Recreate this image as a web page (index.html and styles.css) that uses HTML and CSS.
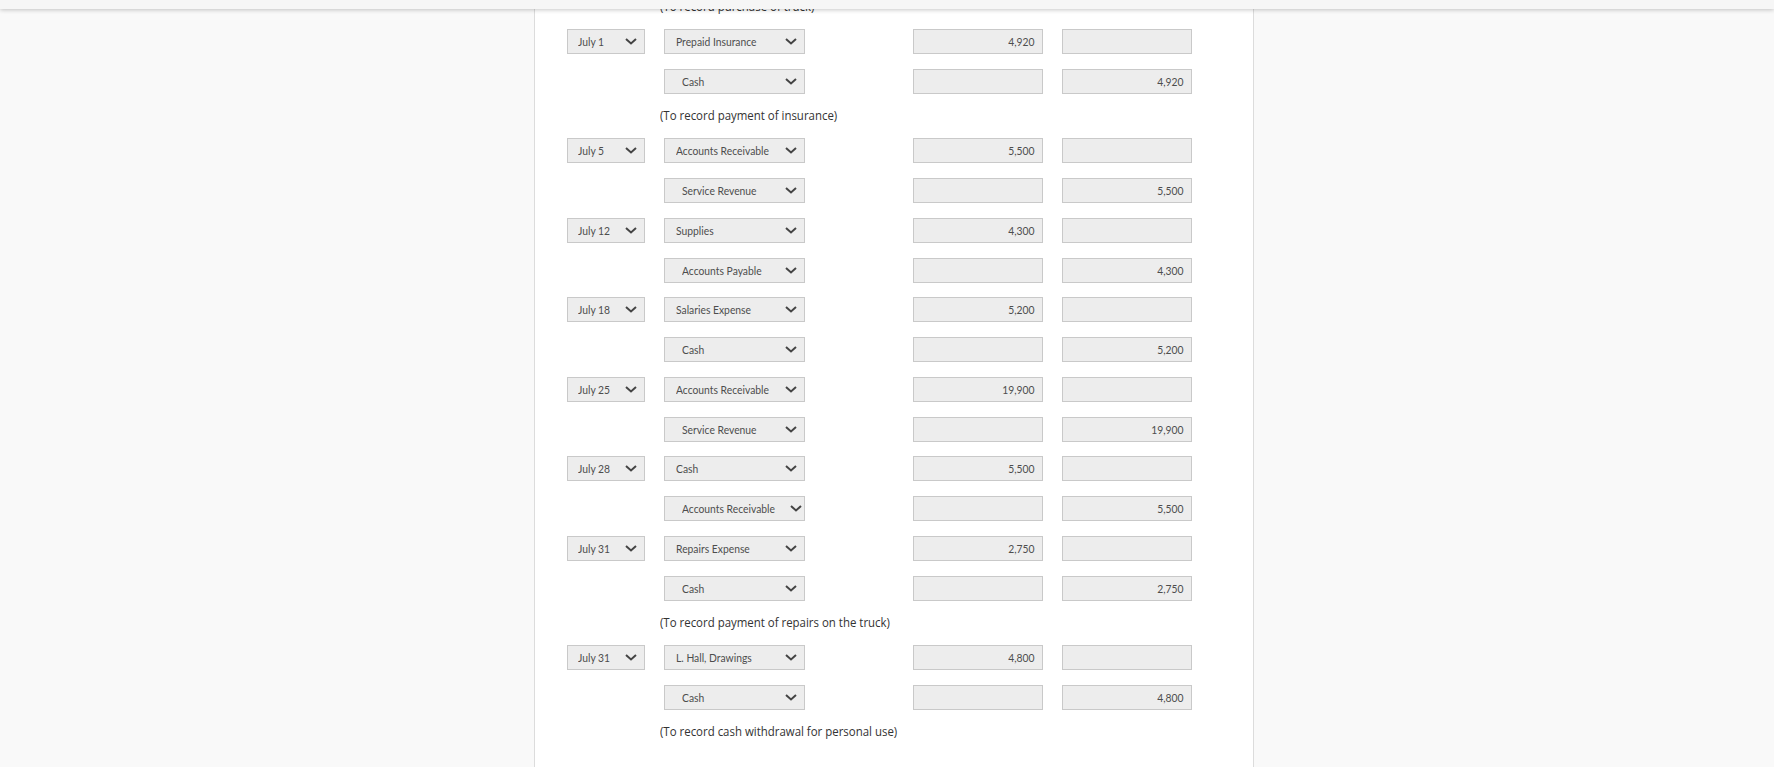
FILE: index.html
```html
<!DOCTYPE html>
<html lang="en">
<head>
<meta charset="utf-8">
<title>Journal entries</title>
<link rel="stylesheet" href="styles.css">
</head>
<body>
<header class="topbar"></header>
<main class="page">
  <section class="panel">
    <div class="journal">
      <p class="note note--first"><span class="ntxt">(To record purchase of truck)</span></p>

      <div class="row">
        <div class="sel sel--date"><span class="txt">July 1</span><svg class="chev" viewBox="0 0 12 7"><path d="M1 1l5 4.5L11 1"/></svg></div>
        <div class="sel sel--acct"><span class="txt">Prepaid Insurance</span><svg class="chev" viewBox="0 0 12 7"><path d="M1 1l5 4.5L11 1"/></svg></div>
        <div class="amt amt--dr"><span class="num">4,920</span></div>
        <div class="amt amt--cr"></div>
      </div>
      <div class="row">
        <div class="date-gap"></div>
        <div class="sel sel--acct sel--credit"><span class="txt">Cash</span><svg class="chev" viewBox="0 0 12 7"><path d="M1 1l5 4.5L11 1"/></svg></div>
        <div class="amt amt--dr"></div>
        <div class="amt amt--cr"><span class="num">4,920</span></div>
      </div>
      <p class="note"><span class="ntxt">(To record payment of insurance)</span></p>

      <div class="row">
        <div class="sel sel--date"><span class="txt">July 5</span><svg class="chev" viewBox="0 0 12 7"><path d="M1 1l5 4.5L11 1"/></svg></div>
        <div class="sel sel--acct"><span class="txt">Accounts Receivable</span><svg class="chev" viewBox="0 0 12 7"><path d="M1 1l5 4.5L11 1"/></svg></div>
        <div class="amt amt--dr"><span class="num">5,500</span></div>
        <div class="amt amt--cr"></div>
      </div>
      <div class="row">
        <div class="date-gap"></div>
        <div class="sel sel--acct sel--credit"><span class="txt">Service Revenue</span><svg class="chev" viewBox="0 0 12 7"><path d="M1 1l5 4.5L11 1"/></svg></div>
        <div class="amt amt--dr"></div>
        <div class="amt amt--cr"><span class="num">5,500</span></div>
      </div>

      <div class="row">
        <div class="sel sel--date"><span class="txt">July 12</span><svg class="chev" viewBox="0 0 12 7"><path d="M1 1l5 4.5L11 1"/></svg></div>
        <div class="sel sel--acct"><span class="txt">Supplies</span><svg class="chev" viewBox="0 0 12 7"><path d="M1 1l5 4.5L11 1"/></svg></div>
        <div class="amt amt--dr"><span class="num">4,300</span></div>
        <div class="amt amt--cr"></div>
      </div>
      <div class="row">
        <div class="date-gap"></div>
        <div class="sel sel--acct sel--credit"><span class="txt">Accounts Payable</span><svg class="chev" viewBox="0 0 12 7"><path d="M1 1l5 4.5L11 1"/></svg></div>
        <div class="amt amt--dr"></div>
        <div class="amt amt--cr"><span class="num">4,300</span></div>
      </div>

      <div class="row">
        <div class="sel sel--date"><span class="txt">July 18</span><svg class="chev" viewBox="0 0 12 7"><path d="M1 1l5 4.5L11 1"/></svg></div>
        <div class="sel sel--acct"><span class="txt">Salaries Expense</span><svg class="chev" viewBox="0 0 12 7"><path d="M1 1l5 4.5L11 1"/></svg></div>
        <div class="amt amt--dr"><span class="num">5,200</span></div>
        <div class="amt amt--cr"></div>
      </div>
      <div class="row">
        <div class="date-gap"></div>
        <div class="sel sel--acct sel--credit"><span class="txt">Cash</span><svg class="chev" viewBox="0 0 12 7"><path d="M1 1l5 4.5L11 1"/></svg></div>
        <div class="amt amt--dr"></div>
        <div class="amt amt--cr"><span class="num">5,200</span></div>
      </div>

      <div class="row">
        <div class="sel sel--date"><span class="txt">July 25</span><svg class="chev" viewBox="0 0 12 7"><path d="M1 1l5 4.5L11 1"/></svg></div>
        <div class="sel sel--acct"><span class="txt">Accounts Receivable</span><svg class="chev" viewBox="0 0 12 7"><path d="M1 1l5 4.5L11 1"/></svg></div>
        <div class="amt amt--dr"><span class="num">19,900</span></div>
        <div class="amt amt--cr"></div>
      </div>
      <div class="row">
        <div class="date-gap"></div>
        <div class="sel sel--acct sel--credit"><span class="txt">Service Revenue</span><svg class="chev" viewBox="0 0 12 7"><path d="M1 1l5 4.5L11 1"/></svg></div>
        <div class="amt amt--dr"></div>
        <div class="amt amt--cr"><span class="num">19,900</span></div>
      </div>

      <div class="row">
        <div class="sel sel--date"><span class="txt">July 28</span><svg class="chev" viewBox="0 0 12 7"><path d="M1 1l5 4.5L11 1"/></svg></div>
        <div class="sel sel--acct"><span class="txt">Cash</span><svg class="chev" viewBox="0 0 12 7"><path d="M1 1l5 4.5L11 1"/></svg></div>
        <div class="amt amt--dr"><span class="num">5,500</span></div>
        <div class="amt amt--cr"></div>
      </div>
      <div class="row">
        <div class="date-gap"></div>
        <div class="sel sel--acct sel--credit"><span class="txt">Accounts Receivable</span><svg class="chev" viewBox="0 0 12 7"><path d="M1 1l5 4.5L11 1"/></svg></div>
        <div class="amt amt--dr"></div>
        <div class="amt amt--cr"><span class="num">5,500</span></div>
      </div>

      <div class="row">
        <div class="sel sel--date"><span class="txt">July 31</span><svg class="chev" viewBox="0 0 12 7"><path d="M1 1l5 4.5L11 1"/></svg></div>
        <div class="sel sel--acct"><span class="txt">Repairs Expense</span><svg class="chev" viewBox="0 0 12 7"><path d="M1 1l5 4.5L11 1"/></svg></div>
        <div class="amt amt--dr"><span class="num">2,750</span></div>
        <div class="amt amt--cr"></div>
      </div>
      <div class="row">
        <div class="date-gap"></div>
        <div class="sel sel--acct sel--credit"><span class="txt">Cash</span><svg class="chev" viewBox="0 0 12 7"><path d="M1 1l5 4.5L11 1"/></svg></div>
        <div class="amt amt--dr"></div>
        <div class="amt amt--cr"><span class="num">2,750</span></div>
      </div>
      <p class="note"><span class="ntxt">(To record payment of repairs on the truck)</span></p>

      <div class="row">
        <div class="sel sel--date"><span class="txt">July 31</span><svg class="chev" viewBox="0 0 12 7"><path d="M1 1l5 4.5L11 1"/></svg></div>
        <div class="sel sel--acct"><span class="txt">L. Hall, Drawings</span><svg class="chev" viewBox="0 0 12 7"><path d="M1 1l5 4.5L11 1"/></svg></div>
        <div class="amt amt--dr"><span class="num">4,800</span></div>
        <div class="amt amt--cr"></div>
      </div>
      <div class="row">
        <div class="date-gap"></div>
        <div class="sel sel--acct sel--credit"><span class="txt">Cash</span><svg class="chev" viewBox="0 0 12 7"><path d="M1 1l5 4.5L11 1"/></svg></div>
        <div class="amt amt--dr"></div>
        <div class="amt amt--cr"><span class="num">4,800</span></div>
      </div>
      <p class="note"><span class="ntxt">(To record cash withdrawal for personal use)</span></p>
    </div>
  </section>
</main>
</body>
</html>
```

FILE: styles.css
```css
* { box-sizing: border-box; }

html, body {
  margin: 0;
  padding: 0;
  background: #f9f9f9;
  overflow: hidden;
}

.topbar {
  position: fixed;
  top: 0;
  left: 0;
  right: 0;
  height: 9px;
  background: #f6f6f6;
  box-shadow: 0 1px 4px rgba(0, 0, 0, 0.22);
  z-index: 10;
}

.page {
  display: block;
}

.panel {
  margin-left: 534px;
  width: 720px;
  min-height: 767px;
  background: #ffffff;
  border-left: 1px solid #dcdcdc;
  border-right: 1px solid #dcdcdc;
}

.journal {
  display: flex;
  flex-direction: column;
  padding-left: 32px;
}

.row {
  display: flex;
  height: 25px;
  margin-bottom: 14.75px;
}

.date-gap {
  width: 78px;
  flex: none;
}

.sel, .amt {
  height: 25px;
  background: #ededed;
  border: 1px solid #c9c9c9;
  display: flex;
  align-items: center;
  font-family: Lato, "Liberation Sans", sans-serif;
  font-size: 12px;
  color: #4d4d4d;
  flex: none;
}

.sel {
  justify-content: space-between;
  padding-right: 7px;
}

.sel--date {
  width: 78px;
  padding-left: 10px;
}

.sel--acct {
  width: 141px;
  margin-left: 19px;
  padding-left: 11px;
}

.sel--credit {
  padding-left: 17px;
}

.txt, .num {
  display: inline-block;
  white-space: nowrap;
  transform: scaleX(0.86);
}

.txt { transform-origin: left center; }

.chev {
  width: 12px;
  height: 7px;
  flex: none;
  fill: none;
  stroke: #444;
  stroke-width: 2;
}

.amt {
  width: 130px;
  justify-content: flex-end;
  padding-right: 7px;
}

.num { transform-origin: right center; }

.amt--dr { margin-left: 108px; }
.amt--cr { margin-left: 19px; }

.note {
  margin: -3.5px 0 13.25px 93px;
  height: 20px;
  line-height: 20px;
  font-family: "Open Sans", "Liberation Sans", sans-serif;
  font-size: 13px;
  color: #333;
  white-space: nowrap;
}

.note--first {
  margin-top: -4.25px;
}

.ntxt {
  display: inline-block;
  transform: scaleX(0.88);
  transform-origin: left center;
}
```
